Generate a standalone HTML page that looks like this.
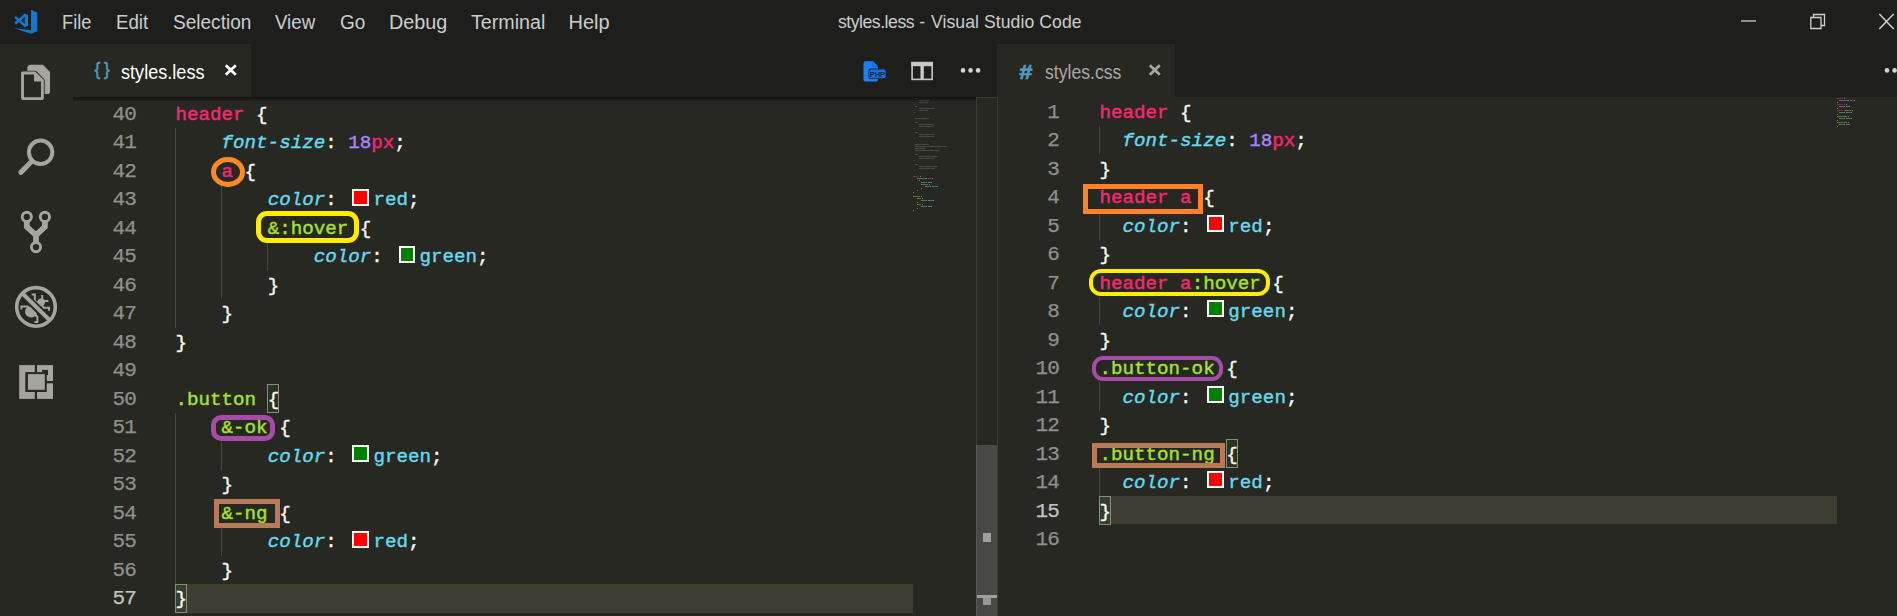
<!DOCTYPE html>
<html lang="en">
<head>
<meta charset="utf-8">
<title>styles.less - Visual Studio Code</title>
<style>
*{box-sizing:border-box;margin:0;padding:0}
html,body{width:1897px;height:616px;overflow:hidden;background:#272822}
body{position:relative;font-family:"Liberation Sans",sans-serif;color:#ccc}
.abs{position:absolute}
#titlebar{position:absolute;left:0;top:0;width:1897px;height:44px;background:#1e1f1c}
.menu{position:absolute;top:0;height:44px;line-height:44px;font-size:20px;color:#cccccc;white-space:nowrap;transform-origin:0 50%}
#wtitle{position:absolute;top:0;height:44px;line-height:43px;font-size:18.6px;color:#cccccc;left:837.6px;white-space:nowrap;transform-origin:0 50%;transform:scaleX(.945)}
#activity{position:absolute;left:0;top:44px;width:73px;height:572px;background:#272822}
.tabs{position:absolute;top:44px;height:52.5px;background:#1e1f1c}
.tab{position:absolute;top:0;height:52.5px;background:#272822}
.tabl{position:absolute;top:0;height:52px;line-height:56px;font-size:20px;white-space:nowrap;transform-origin:0 50%}
.shadow{position:absolute;top:96.5px;height:5px;background:linear-gradient(to bottom,rgba(0,0,0,.55),rgba(0,0,0,0))}
.ed{position:absolute;top:0;height:616px;overflow:hidden}
.ln,.cl{position:absolute;height:28.5px;line-height:28.5px;font-family:"Liberation Mono",monospace;font-size:19.2px;white-space:pre}
.ln{color:#90908a;text-align:right;font-size:21px;letter-spacing:-0.9px;margin-top:1.2px;-webkit-text-stroke:0.25px}
.ln.act{color:#c2c2bf}
.cl{margin-top:1.2px;-webkit-text-stroke:0.4px}
.cl{color:#f8f8f2}
.p{color:#f92672}.b{color:#66d9ef}.v{color:#ae81ff}.g{color:#a6e22e}.w{color:#f8f8f2}
.i{font-style:italic}
.sp{display:inline-block;width:25.200px;height:1px}
.sw{position:absolute;height:17.200px;border:2px solid #fafafa}
.bmb{position:absolute;width:12px;height:28.500px;border:1.500px solid #8a8a8a;background:rgba(40,70,30,.4)}
.bm{outline:1px solid #888;outline-offset:-1px;background:rgba(62,61,50,0.0)}
.ig{position:absolute;width:1px;background:#464741}
.hl{position:absolute;height:28.5px;background:#3e3d32}
#leftcode .ln{left:73px;width:63px}
#leftcode .cl{left:175.5px}
#leftcode .ig{margin-left:175.5px}
#rightcode .ln{left:0;width:61px;margin-top:1.8px}
#rightcode .cl{left:101.5px;margin-top:1.8px}
#rightcode .ig{margin-left:101.5px}
.ann{position:absolute;border-style:solid;border-width:5.1px}
</style>
</head>
<body>

<!-- ============ TITLE BAR ============ -->
<div id="titlebar">
  <svg class="abs" style="left:13px;top:9px" width="25" height="26" viewBox="0 0 25 26">
    <path d="M18 0.800 L24.100 3.400 V22.200 L18 24.800 Z" fill="#0e7ad3"/>
    <path d="M0.400 19 L18 21.200 V24.800 Z" fill="#0e7ad3"/>
    <path d="M11.800 4.700 L15.050 6 V16.700 L11.800 18 Z" fill="#0e7ad3"/>
    <path d="M2.060 7.900 L12.600 17.200 M2.060 14.750 L12.600 5.450" stroke="#0e7ad3" stroke-width="2.500" fill="none"/>
  </svg>
  <div class="menu" style="left:62px;transform:scaleX(0.913)">File</div>
  <div class="menu" style="left:115.8px;transform:scaleX(0.935)">Edit</div>
  <div class="menu" style="left:172.5px;transform:scaleX(0.952)">Selection</div>
  <div class="menu" style="left:275px;transform:scaleX(0.934)">View</div>
  <div class="menu" style="left:340px;transform:scaleX(0.95)">Go</div>
  <div class="menu" style="left:388.8px;transform:scaleX(0.99)">Debug</div>
  <div class="menu" style="left:470.7px;transform:scaleX(0.984)">Terminal</div>
  <div class="menu" style="left:568.5px;transform:scaleX(1.0)">Help</div>
  <div id="wtitle"><span style="letter-spacing:-0.48px">styles.less</span><span style="letter-spacing:0.45px"> - </span><span style="letter-spacing:0.09px">Visual Studio Code</span></div>
  <!-- window controls -->
  <svg class="abs" style="left:1735px;top:8px" width="162" height="28" viewBox="0 0 162 28" fill="none" stroke="#d0d0d0" stroke-width="1.3">
    <path d="M6 13 H21"/>
    <path d="M75.800 9.500 H86 V20.500 H75.800 Z M78.500 9.500 V6.500 H89.500 V17.500 H86"/>
    <path d="M144.300 6 L158.700 21 M158.700 6 L144.300 21" stroke-width="1.500"/>
  </svg>
</div>

<!-- ============ ACTIVITY BAR ============ -->
<div id="activity">
  <!-- files -->
  <svg class="abs" style="left:18px;top:19px" width="36" height="40" viewBox="0 0 36 40">
    <path d="M9.300 9 V5.300 Q9.300 1.800 12.800 1.800 H24.900 L32 8.900 V28.500 Q32 31.100 29.400 31.100 H20 V9 Z" fill="#a5a59d"/>
    <path d="M4.500 10 H16.800 L24.400 17.600 V34.400 Q24.400 35.600 23.200 35.600 H5.700 Q4.500 35.600 4.500 34.400 Z" fill="#272822" stroke="#272822" stroke-width="4.600" stroke-linejoin="round"/>
    <path d="M4.500 10 H16.800 L24.400 17.600 V34.400 Q24.400 35.600 23.200 35.600 H5.700 Q4.500 35.600 4.500 34.400 Z" fill="none" stroke="#a5a59d" stroke-width="2.900" stroke-linejoin="round"/>
    <path d="M17.200 10.800 L23.600 17.400 H17.200 Z" fill="#a5a59d" stroke="#a5a59d" stroke-width="2.400" stroke-linejoin="round"/>
  </svg>
  <!-- search -->
  <svg class="abs" style="left:16px;top:91px" width="42" height="42" viewBox="0 0 42 42" fill="none" stroke="#a5a59d" stroke-width="4" stroke-linecap="round">
    <circle cx="24.600" cy="17.300" r="11.700"/>
    <path d="M16 26 L5 37.300" stroke-width="5.200"/>
  </svg>
  <!-- source control -->
  <svg class="abs" style="left:16px;top:163px" width="42" height="50" viewBox="0 0 42 50" fill="none" stroke="#a5a59d" stroke-width="2.900">
    <circle cx="10.800" cy="9.900" r="4.600"/>
    <circle cx="28.900" cy="9.900" r="4.600"/>
    <circle cx="20" cy="40.100" r="4.600"/>
    <path d="M10.800 14.500 V19.800 L20 28.200 V35.500 M28.900 14.500 V19.800 L20 28.200" stroke-width="5.800" stroke-linejoin="miter"/>
  </svg>
  <!-- debug (disabled bug) -->
  <svg class="abs" style="left:13px;top:240px" width="46" height="46" viewBox="0 0 46 46" fill="none" stroke="#a5a59d" stroke-width="2">
    <ellipse cx="18.200" cy="27.800" rx="6.200" ry="5.600" fill="#a5a59d" stroke="none"/>
    <circle cx="28.200" cy="18.300" r="3.700" fill="#a5a59d" stroke="none"/>
    <path d="M24 22 L28 18" stroke-width="6"/>
    <path d="M18.800 10.400 H21.800 V16.500 L24.500 19.500"/>
    <path d="M29.200 11 V16"/>
    <path d="M31 17 H35.400"/>
    <path d="M16.500 24.500 L14.500 22.600 H8.400 V25.600"/>
    <path d="M22 30.500 L24.400 33 V38 H21.400"/>
    <path d="M29 21 L30.500 23.800 H36 V26.800"/>
    <path d="M10.500 10.500 L36 36" stroke="#272822" stroke-width="8"/>
    <path d="M9.500 9.500 L37 36.500" stroke-width="3.900"/>
    <circle cx="23" cy="22.900" r="19.300" stroke-width="3.600"/>
  </svg>
  <!-- extensions -->
  <svg class="abs" style="left:18px;top:320px" width="36" height="36" viewBox="0 0 36 36">
    <rect x="1.200" y="1.100" width="33.800" height="33.800" fill="#a5a59d"/>
    <rect x="7.300" y="8.100" width="21.450" height="19.900" fill="#272822"/>
    <rect x="16.800" y="0" width="2.200" height="9" fill="#272822"/>
    <rect x="16.800" y="27" width="2.200" height="9" fill="#272822"/>
    <rect x="28" y="17" width="8" height="2.300" fill="#272822"/>
    <rect x="24.200" y="5.900" width="5.800" height="5.200" fill="#272822"/>
    <rect x="9.900" y="10.100" width="16.900" height="15.700" fill="#a5a59d"/>
  </svg>
</div>

<!-- ============ LEFT GROUP ============ -->
<div class="tabs" style="left:73px;width:924px">
  <div class="tab" style="left:0;width:178px"></div>
  <div class="tabl" style="left:21.500px;color:#519aba;font-size:17.5px;letter-spacing:3.6px;line-height:50px;-webkit-text-stroke:0.5px #519aba">{}</div>
  <div class="tabl" style="left:47.500px;color:#ffffff;transform:scaleX(.905)">styles.less</div>
  <svg class="abs" style="left:151px;top:19.300px" width="14" height="14" viewBox="0 0 14 14"><path d="M1.800 2.200 L11.800 11.800 M11.800 2.200 L1.800 11.800" stroke="#ffffff" stroke-width="2.700" fill="none"/></svg>
  <!-- editor actions -->
  <svg class="abs" style="left:789px;top:15px" width="26" height="24" viewBox="0 0 26 24">
    <path d="M3.300 2.200 H11 L16 7.200 V20.800 Q16 22.600 14.200 22.600 H3.300 Q1.500 22.600 1.500 20.800 V4 Q1.500 2.200 3.300 2.200 Z" fill="#1b80f0"/>
    <path d="M10.800 2.600 V7.400 H15.600" fill="none" stroke="#1466cc" stroke-width="1.100"/>
    <rect x="6.500" y="9.600" width="17.800" height="10.400" rx="2.200" fill="#1e1f1c"/>
    <rect x="7.300" y="10.400" width="16.200" height="8.800" rx="1.700" fill="#1b80f0"/>
    <rect x="8.100" y="11.200" width="14.600" height="7.200" rx="1.200" fill="#1a76e2" stroke="#1560c4" stroke-width="0.700"/>
    <text x="15.400" y="17.500" font-family="Liberation Sans, sans-serif" font-size="7.500" font-weight="bold" fill="#10223f" text-anchor="middle">PHP</text>
  </svg>
  <svg class="abs" style="left:837px;top:17px" width="24" height="21" viewBox="0 0 24 21" fill="none" stroke="#c8c8c8">
    <rect x="2.100" y="1.700" width="20.100" height="16.700" stroke-width="1.600"/>
    <path d="M1.300 3.050 H23" stroke-width="4.300"/>
    <path d="M12.150 3 V19" stroke-width="3.400"/>
  </svg>
  <svg class="abs" style="left:886px;top:22px" width="24" height="9" viewBox="0 0 24 9" fill="#d4d4d4">
    <circle cx="4" cy="4.400" r="2.300"/><circle cx="11.600" cy="4.400" r="2.300"/><circle cx="19.100" cy="4.400" r="2.300"/>
  </svg>
</div>

<div class="ed" style="left:73px;width:924px">
  <div class="hl" style="left:102.5px;top:584px;width:737px"></div>
<!--LEFT_GUIDES_PLACEHOLDER-->
</div>

<div id="leftcode" class="abs" style="left:0;top:0;width:997px;height:616px;overflow:hidden">
<div class="ig" style="left:-0.5px;top:128px;height:199.5px"></div>
<div class="ig" style="left:45.58px;top:185px;height:114px"></div>
<div class="ig" style="left:91.66px;top:242px;height:28.5px"></div>
<div class="ig" style="left:-0.5px;top:413px;height:171px"></div>
<div class="ig" style="left:45.58px;top:441.5px;height:28.5px"></div>
<div class="ig" style="left:45.58px;top:527px;height:28.5px"></div>
<div class="bmb" style="left:267px;top:384px"></div><div class="bmb" style="left:175px;top:584px"></div>
<div class="ln" style="top:99.5px">40</div><div class="cl" style="top:99.5px"><span class="p">header</span><span class="w"> {</span></div>
<div class="ln" style="top:128px">41</div><div class="cl" style="top:128px">    <span class="b i">font-size</span><span class="w">: </span><span class="v">18</span><span class="p">px</span><span class="w">;</span></div>
<div class="ln" style="top:156.5px">42</div><div class="cl" style="top:156.5px">    <span class="p">a</span><span class="w"> {</span></div>
<div class="ln" style="top:185px">43</div><div class="cl" style="top:185px">        <span class="b i">color</span><span class="w">: </span><i class="sp"></i><span class="b">red</span><span class="w">;</span></div>
<div class="ln" style="top:213.5px">44</div><div class="cl" style="top:213.5px">        <span class="g">&amp;:hover</span><span class="w"> {</span></div>
<div class="ln" style="top:242px">45</div><div class="cl" style="top:242px">            <span class="b i">color</span><span class="w">: </span><i class="sp"></i><span class="b">green</span><span class="w">;</span></div>
<div class="ln" style="top:270.5px">46</div><div class="cl" style="top:270.5px">        <span class="w">}</span></div>
<div class="ln" style="top:299px">47</div><div class="cl" style="top:299px">    <span class="w">}</span></div>
<div class="ln" style="top:327.5px">48</div><div class="cl" style="top:327.5px"><span class="w">}</span></div>
<div class="ln" style="top:356px">49</div><div class="cl" style="top:356px"></div>
<div class="ln" style="top:384.5px">50</div><div class="cl" style="top:384.5px"><span class="g">.button</span><span class="w"> </span><span class="w">{</span></div>
<div class="ln" style="top:413px">51</div><div class="cl" style="top:413px">    <span class="g">&amp;-ok</span><span class="w"> {</span></div>
<div class="ln" style="top:441.5px">52</div><div class="cl" style="top:441.5px">        <span class="b i">color</span><span class="w">: </span><i class="sp"></i><span class="b">green</span><span class="w">;</span></div>
<div class="ln" style="top:470px">53</div><div class="cl" style="top:470px">    <span class="w">}</span></div>
<div class="ln" style="top:498.5px">54</div><div class="cl" style="top:498.5px">    <span class="g">&amp;-ng</span><span class="w"> {</span></div>
<div class="ln" style="top:527px">55</div><div class="cl" style="top:527px">        <span class="b i">color</span><span class="w">: </span><i class="sp"></i><span class="b">red</span><span class="w">;</span></div>
<div class="ln" style="top:555.5px">56</div><div class="cl" style="top:555.5px">    <span class="w">}</span></div>
<div class="ln act" style="top:584px">57</div><div class="cl" style="top:584px"><span class="w">}</span></div>
<div class="sw" style="left:351.95px;top:189px;width:17.3px;background:#ff0000"></div>
<div class="sw" style="left:399.00px;top:246px;width:16.2px;background:#008000"></div>
<div class="sw" style="left:351.95px;top:445px;width:17.3px;background:#008000"></div>
<div class="sw" style="left:351.95px;top:531px;width:17.3px;background:#ff0000"></div>
</div>

<!-- left minimap -->
<svg class="abs" style="left:913px;top:96.700px;opacity:.62" width="62" height="120" viewBox="0 0 62 120" fill="none" stroke-width="1.2" stroke-dasharray="0.800 0.350">
<path d="M2 1.5h2" stroke="#75756c"/>
<path d="M6 3.5h10" stroke="#75756c"/>
<path d="M6 5.5h9" stroke="#75756c"/>
<path d="M1 7.5h1" stroke="#75756c"/>
<path d="M2 9.5h2" stroke="#75756c"/>
<path d="M6 11.5h15" stroke="#75756c"/>
<path d="M6 13.5h9" stroke="#75756c"/>
<path d="M1 15.5h1" stroke="#75756c"/>
<path d="M2 21.5h14" stroke="#75756c"/>
<path d="M2 25.5h3" stroke="#75756c"/>
<path d="M6 27.5h15" stroke="#75756c"/>
<path d="M6 29.5h15" stroke="#75756c"/>
<path d="M1 31.5h1" stroke="#75756c"/>
<path d="M2 35.5h3" stroke="#75756c"/>
<path d="M6 37.5h15" stroke="#75756c"/>
<path d="M6 39.5h15" stroke="#75756c"/>
<path d="M1 41.5h1" stroke="#75756c"/>
<path d="M2 47.5h14" stroke="#75756c"/>
<path d="M2 49.5h32" stroke="#75756c"/>
<path d="M2 51.5h10" stroke="#75756c"/>
<path d="M2 53.5h24" stroke="#75756c"/>
<path d="M2 57.5h3" stroke="#75756c"/>
<path d="M6 59.5h19" stroke="#75756c"/>
<path d="M6 61.5h16" stroke="#75756c"/>
<path d="M1 63.5h1" stroke="#75756c"/>
<path d="M2 67.5h3" stroke="#75756c"/>
<path d="M6 69.5h19" stroke="#75756c"/>
<path d="M6 71.5h16" stroke="#75756c"/>
<path d="M1 73.5h1" stroke="#75756c"/>
<path d="M0 79.5h6" stroke="#f92672"/><path d="M7 79.5h1" stroke="#d8d8d0"/>
<path d="M4 81.5h9" stroke="#66d9ef"/><path d="M13 81.5h1" stroke="#d8d8d0"/><path d="M15 81.5h2" stroke="#ae81ff"/><path d="M17 81.5h2" stroke="#f92672"/><path d="M19 81.5h1" stroke="#d8d8d0"/>
<path d="M4 83.5h1" stroke="#f92672"/><path d="M6 83.5h1" stroke="#d8d8d0"/>
<path d="M8 85.5h5" stroke="#66d9ef"/><path d="M13 85.5h1" stroke="#d8d8d0"/><path d="M15 85.5h3" stroke="#66d9ef"/><path d="M18 85.5h1" stroke="#d8d8d0"/>
<path d="M8 87.5h7" stroke="#a6e22e"/><path d="M16 87.5h1" stroke="#d8d8d0"/>
<path d="M12 89.5h5" stroke="#66d9ef"/><path d="M17 89.5h1" stroke="#d8d8d0"/><path d="M19 89.5h5" stroke="#66d9ef"/><path d="M24 89.5h1" stroke="#d8d8d0"/>
<path d="M8 91.5h1" stroke="#d8d8d0"/>
<path d="M4 93.5h1" stroke="#d8d8d0"/>
<path d="M0 95.5h1" stroke="#d8d8d0"/>
<path d="M0 99.5h7" stroke="#a6e22e"/><path d="M8 99.5h1" stroke="#d8d8d0"/>
<path d="M4 101.5h4" stroke="#a6e22e"/><path d="M9 101.5h1" stroke="#d8d8d0"/>
<path d="M8 103.5h5" stroke="#66d9ef"/><path d="M13 103.5h1" stroke="#d8d8d0"/><path d="M15 103.5h5" stroke="#66d9ef"/><path d="M20 103.5h1" stroke="#d8d8d0"/>
<path d="M4 105.5h1" stroke="#d8d8d0"/>
<path d="M4 107.5h4" stroke="#a6e22e"/><path d="M9 107.5h1" stroke="#d8d8d0"/>
<path d="M8 109.5h5" stroke="#66d9ef"/><path d="M13 109.5h1" stroke="#d8d8d0"/><path d="M15 109.5h3" stroke="#66d9ef"/><path d="M18 109.5h1" stroke="#d8d8d0"/>
<path d="M4 111.5h1" stroke="#d8d8d0"/>
<path d="M0 113.5h1" stroke="#d8d8d0"/>
</svg>

<!-- left scrollbar / overview ruler -->
<div class="abs" style="left:976px;top:97px;width:1px;height:519px;background:#3b3c37"></div>
<div class="abs" style="left:977px;top:445px;width:20px;height:171px;background:#484944"></div>
<div class="abs" style="left:976px;top:445px;width:1px;height:171px;background:#585954"></div>
<div class="abs" style="left:983px;top:533px;width:8px;height:9px;background:#a0a09c"></div>
<div class="abs" style="left:977px;top:595px;width:20px;height:3px;background:#a0a09c"></div>
<div class="abs" style="left:983px;top:597.500px;width:8px;height:7.500px;background:#969692"></div>

<!-- group border -->
<div class="abs" style="left:997px;top:97px;width:1px;height:519px;background:#3b3c37"></div>
<div class="abs" style="left:976px;top:96.500px;width:21px;height:1px;background:#3b3c37"></div>

<!-- ============ RIGHT GROUP ============ -->
<div class="tabs" style="left:998px;width:899px">
  <div class="tab" style="left:-1px;width:178px"></div>
  <div class="tabl" style="left:20.500px;color:#519aba;font-weight:bold;font-style:italic;font-size:20.5px;line-height:55px;transform:scaleX(1.15);-webkit-text-stroke:0.7px #519aba">#</div>
  <div class="tabl" style="left:46.500px;color:#a9a9a4;transform:scaleX(.88)">styles.css</div>
  <svg class="abs" style="left:150px;top:19.300px" width="14" height="14" viewBox="0 0 14 14"><path d="M1.800 2.200 L11.800 11.800 M11.800 2.200 L1.800 11.800" stroke="#a9a9a4" stroke-width="2.700" fill="none"/></svg>
  <svg class="abs" style="left:885px;top:22px" width="24" height="9" viewBox="0 0 24 9" fill="#d4d4d4">
    <circle cx="4" cy="4.400" r="2.300"/><circle cx="11.600" cy="4.400" r="2.300"/>
  </svg>
</div>

<div id="rightcode" class="abs" style="left:998px;top:0;width:899px;height:616px;overflow:hidden">
  <div class="hl" style="left:101.500px;top:496px;width:737.500px;height:28px"></div>
<div class="ig" style="left:-0.5px;top:125.5px;height:28.5px"></div>
<div class="ig" style="left:-0.5px;top:211px;height:28.5px"></div>
<div class="ig" style="left:-0.5px;top:296.5px;height:28.5px"></div>
<div class="ig" style="left:-0.5px;top:382px;height:28.5px"></div>
<div class="ig" style="left:-0.5px;top:467.5px;height:28.5px"></div>
<div class="bmb" style="left:227.5px;top:439px"></div><div class="bmb" style="left:101px;top:496px"></div>
<div class="ln" style="top:97px">1</div><div class="cl" style="top:97px"><span class="p">header</span><span class="w"> {</span></div>
<div class="ln" style="top:125.5px">2</div><div class="cl" style="top:125.5px">  <span class="b i">font-size</span><span class="w">: </span><span class="v">18</span><span class="p">px</span><span class="w">;</span></div>
<div class="ln" style="top:154px">3</div><div class="cl" style="top:154px"><span class="w">}</span></div>
<div class="ln" style="top:182.5px">4</div><div class="cl" style="top:182.5px"><span class="p">header a</span><span class="w"> {</span></div>
<div class="ln" style="top:211px">5</div><div class="cl" style="top:211px">  <span class="b i">color</span><span class="w">: </span><i class="sp"></i><span class="b">red</span><span class="w">;</span></div>
<div class="ln" style="top:239.5px">6</div><div class="cl" style="top:239.5px"><span class="w">}</span></div>
<div class="ln" style="top:268px">7</div><div class="cl" style="top:268px"><span class="p">header a</span><span class="g">:hover</span><span class="w"> {</span></div>
<div class="ln" style="top:296.5px">8</div><div class="cl" style="top:296.5px">  <span class="b i">color</span><span class="w">: </span><i class="sp"></i><span class="b">green</span><span class="w">;</span></div>
<div class="ln" style="top:325px">9</div><div class="cl" style="top:325px"><span class="w">}</span></div>
<div class="ln" style="top:353.5px">10</div><div class="cl" style="top:353.5px"><span class="g">.button-ok</span><span class="w"> {</span></div>
<div class="ln" style="top:382px">11</div><div class="cl" style="top:382px">  <span class="b i">color</span><span class="w">: </span><i class="sp"></i><span class="b">green</span><span class="w">;</span></div>
<div class="ln" style="top:410.5px">12</div><div class="cl" style="top:410.5px"><span class="w">}</span></div>
<div class="ln" style="top:439px">13</div><div class="cl" style="top:439px"><span class="g">.button-ng</span><span class="w"> </span><span class="w">{</span></div>
<div class="ln" style="top:467.5px">14</div><div class="cl" style="top:467.5px">  <span class="b i">color</span><span class="w">: </span><i class="sp"></i><span class="b">red</span><span class="w">;</span></div>
<div class="ln act" style="top:496px">15</div><div class="cl" style="top:496px"><span class="w">}</span></div>
<div class="ln" style="top:524.5px">16</div><div class="cl" style="top:524.5px"></div>
<div class="sw" style="left:208.83px;top:215px;width:17.3px;background:#ff0000"></div>
<div class="sw" style="left:208.83px;top:300px;width:17.3px;background:#008000"></div>
<div class="sw" style="left:208.83px;top:386px;width:17.3px;background:#008000"></div>
<div class="sw" style="left:208.83px;top:471px;width:17.3px;background:#ff0000"></div>
</div>

<!-- right minimap -->
<svg class="abs" style="left:1837px;top:96.600px;opacity:.62" width="30" height="34" viewBox="0 0 30 34" fill="none" stroke-width="1.2" stroke-dasharray="0.800 0.350">
<path d="M0 1.5h6" stroke="#f92672"/><path d="M7 1.5h1" stroke="#d8d8d0"/>
<path d="M2 3.5h9" stroke="#66d9ef"/><path d="M11 3.5h1" stroke="#d8d8d0"/><path d="M13 3.5h2" stroke="#ae81ff"/><path d="M15 3.5h2" stroke="#f92672"/><path d="M17 3.5h1" stroke="#d8d8d0"/>
<path d="M0 5.5h1" stroke="#d8d8d0"/>
<path d="M0 7.5h6" stroke="#f92672"/><path d="M7 7.5h1" stroke="#f92672"/><path d="M9 7.5h1" stroke="#d8d8d0"/>
<path d="M2 9.5h5" stroke="#66d9ef"/><path d="M7 9.5h1" stroke="#d8d8d0"/><path d="M9 9.5h3" stroke="#66d9ef"/><path d="M12 9.5h1" stroke="#d8d8d0"/>
<path d="M0 11.5h1" stroke="#d8d8d0"/>
<path d="M0 13.5h6" stroke="#f92672"/><path d="M7 13.5h1" stroke="#f92672"/><path d="M8 13.5h6" stroke="#a6e22e"/><path d="M15 13.5h1" stroke="#d8d8d0"/>
<path d="M2 15.5h5" stroke="#66d9ef"/><path d="M7 15.5h1" stroke="#d8d8d0"/><path d="M9 15.5h5" stroke="#66d9ef"/><path d="M14 15.5h1" stroke="#d8d8d0"/>
<path d="M0 17.5h1" stroke="#d8d8d0"/>
<path d="M0 19.5h10" stroke="#a6e22e"/><path d="M11 19.5h1" stroke="#d8d8d0"/>
<path d="M2 21.5h5" stroke="#66d9ef"/><path d="M7 21.5h1" stroke="#d8d8d0"/><path d="M9 21.5h5" stroke="#66d9ef"/><path d="M14 21.5h1" stroke="#d8d8d0"/>
<path d="M0 23.5h1" stroke="#d8d8d0"/>
<path d="M0 25.5h10" stroke="#a6e22e"/><path d="M11 25.5h1" stroke="#d8d8d0"/>
<path d="M2 27.5h5" stroke="#66d9ef"/><path d="M7 27.5h1" stroke="#d8d8d0"/><path d="M9 27.5h3" stroke="#66d9ef"/><path d="M12 27.5h1" stroke="#d8d8d0"/>
<path d="M0 29.5h1" stroke="#d8d8d0"/>
</svg>

<!-- tab bar shadows -->
<div class="shadow" style="left:73px;width:903px"></div>

<!-- ============ ANNOTATIONS ============ -->
<div class="ann" style="left:211px;top:156.700px;width:33.600px;height:30.200px;border-color:#ff8a22;border-radius:50%"></div>
<div class="ann" style="left:256px;top:211px;width:103.300px;height:31.600px;border-color:#ffee00;border-radius:11px"></div>
<div class="ann" style="left:211px;top:415.100px;width:63.900px;height:26.200px;border-color:#a64ca6;border-radius:10px"></div>
<div class="ann" style="left:214.300px;top:499.300px;width:65.400px;height:29.100px;border-color:#b97a57"></div>
<div class="ann" style="left:1083px;top:184.100px;width:120px;height:30px;border-color:#ff8228"></div>
<div class="ann" style="left:1088.700px;top:269.400px;width:181px;height:26.400px;border-color:#ffee00;border-radius:12px;border-width:4.700px"></div>
<div class="ann" style="left:1091.900px;top:356px;width:130.900px;height:24.900px;border-color:#a64ca6;border-radius:11px;border-width:4.700px"></div>
<div class="ann" style="left:1091.900px;top:442.600px;width:133.400px;height:25.300px;border-color:#b97a57"></div>

</body>
</html>
